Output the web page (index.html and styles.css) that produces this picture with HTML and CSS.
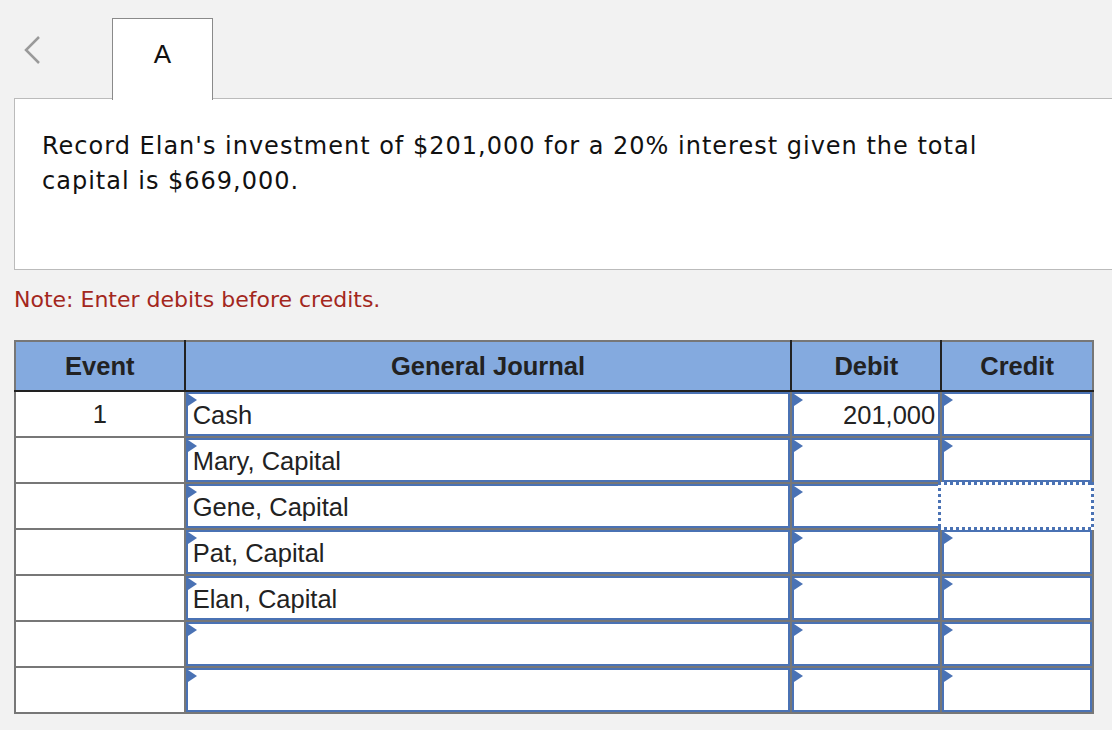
FILE: index.html
```html
<!DOCTYPE html>
<html>
<head>
    <title>Journal Entry</title>
    <link rel="stylesheet" href="styles.css">
</head>
<body>
    <div class="page">
        <div class="tabs">
            <div class="back">
                <svg width="20" height="30" viewBox="0 0 20 30">
                    <polyline points="17,2 4,15 17,28" fill="none" stroke="#9a9a9a" stroke-width="2.5"/>
                </svg>
            </div>
            <div class="tab">A</div>
        </div>

        <div class="question">
            Record Elan's investment of $201,000 for a 20% interest given the total capital is $669,000.
        </div>

        <p class="note">Note: Enter debits before credits.</p>

        <table class="journal">
            <colgroup>
                <col class="col-event">
                <col class="col-account">
                <col class="col-debit">
                <col class="col-credit">
            </colgroup>
            <thead>
                <tr>
                    <th>Event</th>
                    <th>General Journal</th>
                    <th>Debit</th>
                    <th>Credit</th>
                </tr>
            </thead>
            <tbody>
                <tr>
                    <td class="event">1</td>
                    <td><div class="field">Cash</div></td>
                    <td><div class="field amount">201,000</div></td>
                    <td><div class="field"></div></td>
                </tr>
                <tr>
                    <td class="event"></td>
                    <td><div class="field">Mary, Capital</div></td>
                    <td><div class="field"></div></td>
                    <td><div class="field"></div></td>
                </tr>
                <tr>
                    <td class="event"></td>
                    <td><div class="field">Gene, Capital</div></td>
                    <td><div class="field"></div></td>
                    <td><div class="field focused"></div></td>
                </tr>
                <tr>
                    <td class="event"></td>
                    <td><div class="field">Pat, Capital</div></td>
                    <td><div class="field"></div></td>
                    <td><div class="field"></div></td>
                </tr>
                <tr>
                    <td class="event"></td>
                    <td><div class="field">Elan, Capital</div></td>
                    <td><div class="field"></div></td>
                    <td><div class="field"></div></td>
                </tr>
                <tr>
                    <td class="event"></td>
                    <td><div class="field"></div></td>
                    <td><div class="field"></div></td>
                    <td><div class="field"></div></td>
                </tr>
                <tr>
                    <td class="event"></td>
                    <td><div class="field"></div></td>
                    <td><div class="field"></div></td>
                    <td><div class="field"></div></td>
                </tr>
            </tbody>
        </table>
    </div>
</body>
</html>
```

FILE: styles.css
```css
body {
    margin: 0;
    background-color: #f2f2f2;
    font-family: "DejaVu Sans", Verdana, sans-serif;
    color: #111;
    overflow: hidden;
}

.page {
    padding: 18px 0 0 14px;
}

/* tab strip */
.tabs {
    display: flex;
    align-items: flex-start;
    height: 80px;
}

.back {
    width: 98px;
    padding: 17px 0 0 8px;
    box-sizing: border-box;
}

.tab {
    position: relative;
    z-index: 1;
    width: 99px;
    height: 81px;
    border: 1px solid #8a8a8a;
    border-bottom: none;
    background-color: #fff;
    font-family: "Liberation Sans", Arial, sans-serif;
    font-size: 26px;
    text-align: center;
    line-height: 70px;
}

/* question box */
.question {
    height: 140px;
    border: 1px solid #bbb;
    border-right: none;
    background-color: #fff;
    padding: 30px 100px 0 27px;
    font-size: 24px;
    line-height: 35px;
    letter-spacing: 1px;
}

.note {
    margin: 16px 0 0 0;
    color: #a3271d;
    font-size: 22px;
    line-height: 28px;
}

/* journal table */
.journal {
    margin-top: 26px;
    width: 1080px;
    border-collapse: collapse;
    font-family: "Liberation Sans", Arial, sans-serif;
    font-size: 25.5px;
    color: #222;
    background-color: #fff;
}

.col-event { width: 170px; }
.col-account { width: 608px; }
.col-debit { width: 150px; }
.col-credit { width: 152px; }

.journal th {
    height: 48px;
    padding: 0;
    background-color: #84aadf;
    border: 2px solid #777;
    border-bottom-color: #222;
    font-weight: bold;
}

.journal th:not(:last-child) {
    border-right-color: #222;
}

.journal td {
    height: 44px;
    padding: 0;
    border: 2px solid #777;
}

.journal td.event {
    text-align: center;
}

.field {
    position: relative;
    height: 40px;
    border: 2px solid #4a72b4;
    padding: 0 5px;
    line-height: 42px;
    white-space: nowrap;
}

.field::before {
    content: "";
    position: absolute;
    top: 0;
    left: 0;
    border-left: 9px solid #4a72b4;
    border-top: 6px solid transparent;
    border-bottom: 6px solid transparent;
}

.field.amount {
    text-align: right;
    padding-right: 3px;
}

/* keyboard focus ring on the active credit cell */
.field.focused {
    border: none;
    height: 48px;
    margin: -2px -2px -2px -4px;
    background:
        repeating-linear-gradient(90deg, #4a72b4 0 3px, transparent 3px 6px) top / 100% 3px no-repeat,
        repeating-linear-gradient(90deg, #4a72b4 0 3px, transparent 3px 6px) bottom / 100% 3px no-repeat,
        repeating-linear-gradient(180deg, #4a72b4 0 3px, transparent 3px 6px) left / 3px 100% no-repeat,
        repeating-linear-gradient(180deg, #4a72b4 0 3px, transparent 3px 6px) right / 3px 100% no-repeat,
        #fff;
}

.field.focused::before {
    display: none;
}
```
